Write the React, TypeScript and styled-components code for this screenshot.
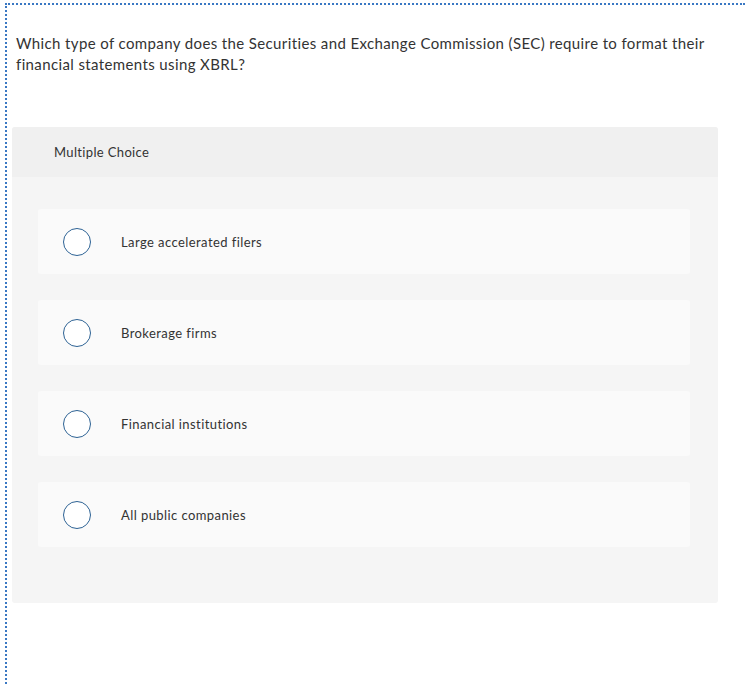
import React from "react";
import styled, { createGlobalStyle } from "styled-components";

const Global = createGlobalStyle`
  html, body { margin: 0; padding: 0; background: #fff; }
  body {
    font-family: "Lato", "Open Sans", sans-serif;
    color: #333;
    overflow: hidden;
    font-variant-ligatures: none;
  }
`;

const Frame = styled.div`
  margin: 3px 0 0 5px;
  min-height: 700px;
  border-top: 2px dotted #3a78c3;
  border-left: 2px dotted #3a78c3;
  padding: 28px 0 0 5px;
  box-sizing: border-box;
`;

const Question = styled.p`
  margin: 0 0 52px 0;
  padding-left: 4px;
  width: 705px;
  font-size: 15px;
  line-height: 21px;
  letter-spacing: 0.38px;
  color: #333;
`;

const Panel = styled.section`
  width: 706px;
  background: #f5f5f5;
  border-radius: 3px;
  overflow: hidden;
`;

const PanelHeader = styled.div`
  height: 50px;
  background: #f0f0f0;
  display: flex;
  align-items: center;
  padding-left: 42px;
  font-size: 13px;
  letter-spacing: 0.35px;
  color: #333;
`;

const Choices = styled.div`
  display: flex;
  flex-direction: column;
  gap: 26px;
  padding: 32px 28px 56px 26px;
`;

const Choice = styled.label`
  height: 65px;
  background: #fafafa;
  border-radius: 3px;
  display: flex;
  align-items: center;
  padding-left: 25px;
  gap: 30px;
  font-size: 13px;
  letter-spacing: 0.42px;
  color: #333;
  cursor: pointer;
`;

const Radio = styled.span`
  width: 28px;
  height: 28px;
  box-sizing: border-box;
  border: 1.5px solid #2d6294;
  border-radius: 50%;
  background: #fff;
  flex: none;
`;

const options = [
  "Large accelerated filers",
  "Brokerage firms",
  "Financial institutions",
  "All public companies",
];

export default function App() {
  return (
    <>
      <Global />
      <Frame>
        <Question>
          Which type of company does the Securities and Exchange Commission (SEC) require to format their
          financial statements using XBRL?
        </Question>
        <Panel>
          <PanelHeader>Multiple Choice</PanelHeader>
          <Choices>
            {options.map((o) => (
              <Choice key={o}>
                <Radio />
                <span>{o}</span>
              </Choice>
            ))}
          </Choices>
        </Panel>
      </Frame>
    </>
  );
}
